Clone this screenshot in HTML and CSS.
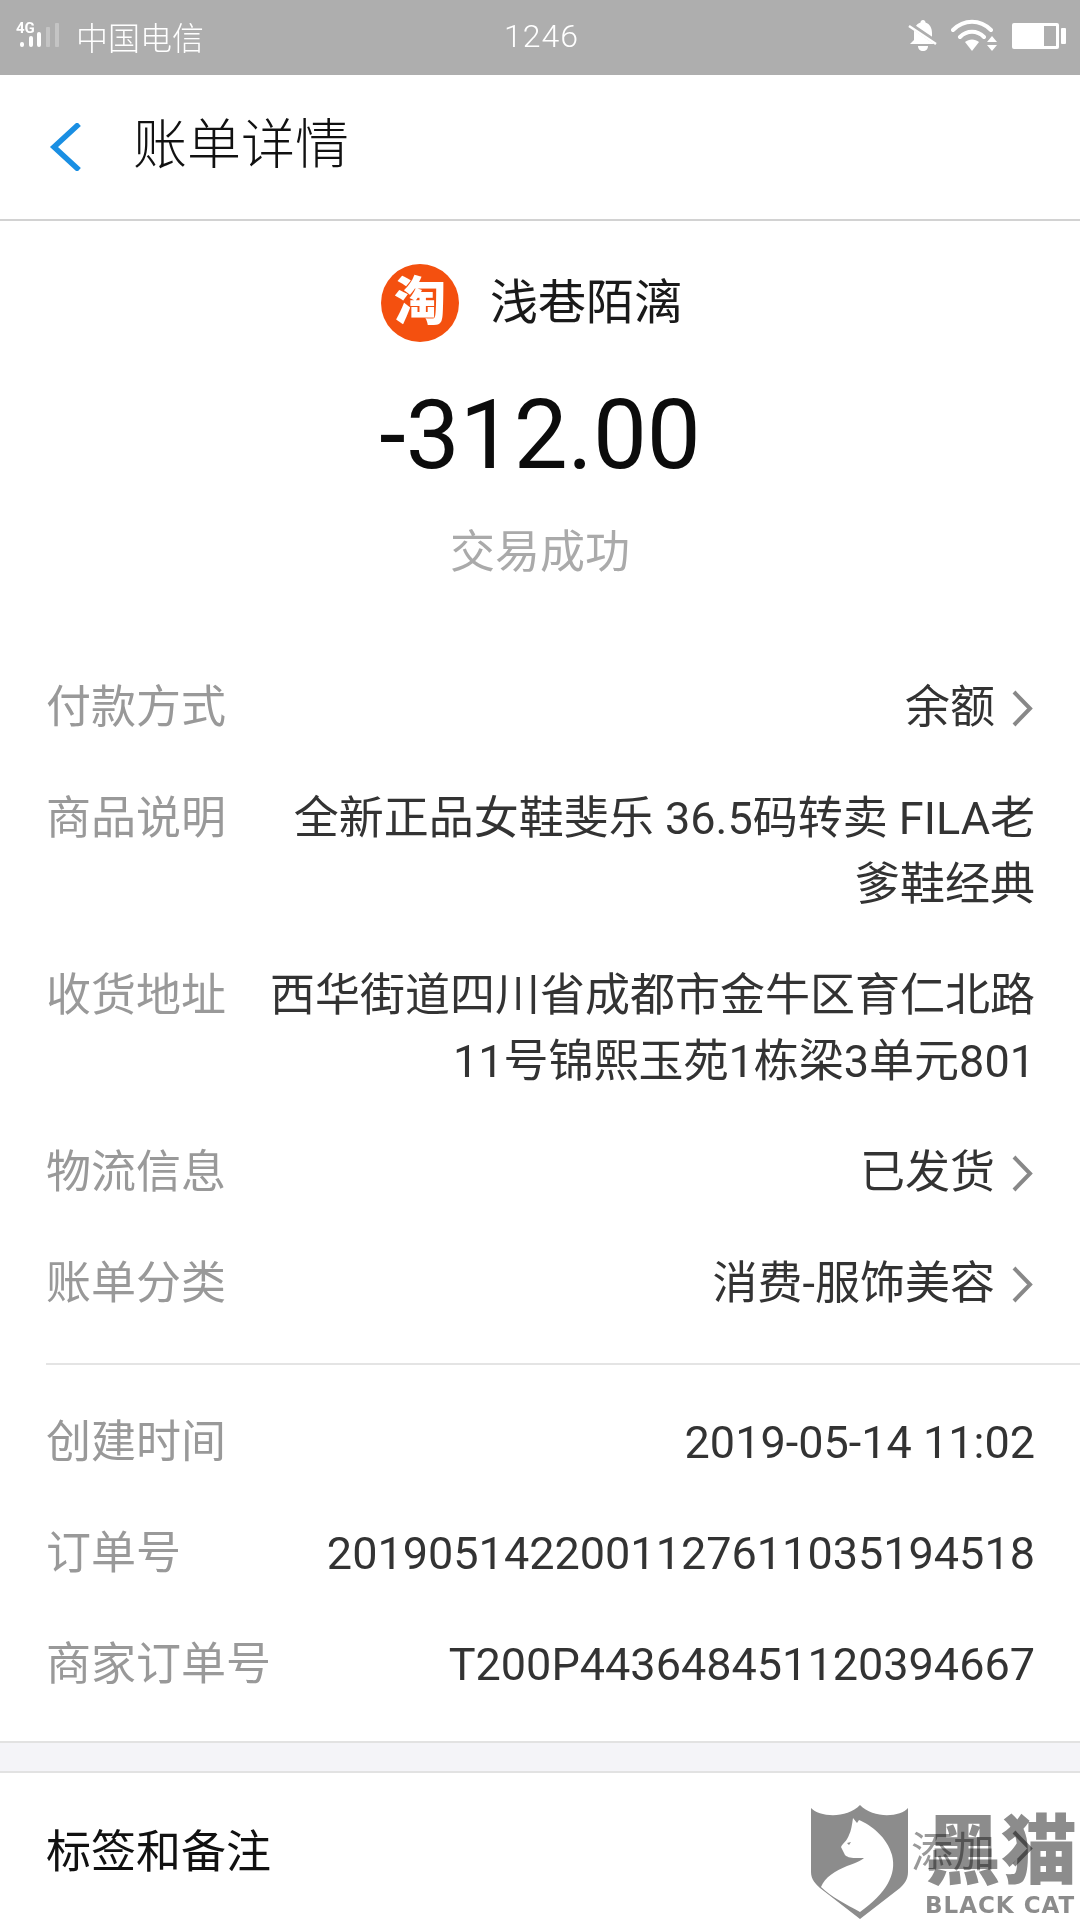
FILE: index.html
```html
<!DOCTYPE html>
<html lang="zh-CN">
<head>
    <meta charset="UTF-8">
    <meta name="viewport" content="width=device-width, initial-scale=1.0">
    <title>账单详情</title>
    <link rel="stylesheet" href="styles.css">
</head>
<body>
    <div class="status-bar">
        <div class="status-left">
            <div class="signal">
                <span class="signal-type">4G</span>
                <svg width="44" height="26" viewBox="0 0 44 26">
                    <rect x="4" y="20" width="4" height="5" rx="2" fill="#fff"/>
                    <rect x="13" y="14" width="4" height="11" rx="2" fill="#fff"/>
                    <rect x="21" y="10" width="4" height="15" rx="2" fill="#fff"/>
                    <rect x="30" y="5" width="4" height="20" rx="1" fill="#c4c4c4"/>
                    <rect x="39" y="1" width="4" height="24" rx="1" fill="#c4c4c4"/>
                </svg>
            </div>
            <span class="carrier">中国电信</span>
        </div>
        <span class="clock">1246</span>
        <div class="status-right">
            <svg width="30" height="34" viewBox="0 0 30 34">
                <path d="M15 1c1.500 0 2.500 1 2.500 2.500C22 5 24 9 24 14v7l4 4H2l4-4v-7c0-5 2-9 6.500-10.500C12.500 2 13.500 1 15 1z" fill="#fff"/>
                <path d="M10 27h10c0 3-2 5-5 5s-5-2-5-5z" fill="#fff"/>
                <path d="M1 5l28 19" stroke="#aeaeae" stroke-width="5"/>
                <path d="M1 7l27 18" stroke="#fff" stroke-width="2.500"/>
            </svg>
            <svg width="48" height="34" viewBox="0 0 48 34">
                <path d="M2 11C13 0 29 0 40 11M9 18c7-7 17-7 24 0" fill="none" stroke="#fff" stroke-width="4" stroke-linecap="round"/>
                <path d="M14 23c4-3.500 10-3.500 14 0l-7 9z" fill="#fff"/>
                <path d="M41 17l5 6H36zM36 26h10l-5 6z" fill="#fff"/>
            </svg>
            <svg width="54" height="28" viewBox="0 0 54 28">
                <rect x="0" y="1" width="47" height="26" rx="2" fill="#fff"/>
                <rect x="32" y="4" width="12" height="20" fill="#aeaeae"/>
                <rect x="49" y="6" width="5" height="16" rx="1" fill="#fff"/>
            </svg>
        </div>
    </div>

    <header class="title-bar">
        <svg class="back" width="34" height="48" viewBox="0 0 34 48">
            <path d="M31 1L6 24l25 23" fill="none" stroke="#1a8fe3" stroke-width="5.500"/>
        </svg>
        <h1>账单详情</h1>
    </header>

    <section class="summary">
        <div class="merchant">
            <span class="merchant-logo">淘</span>
            <span class="merchant-name">浅巷陌漓</span>
        </div>
        <div class="amount">-312.00</div>
        <div class="trade-status">交易成功</div>
    </section>

    <section class="details">
        <div class="row">
            <span class="label">付款方式</span>
            <span class="value">余额</span>
            <svg class="arrow" width="24" height="37" viewBox="0 0 24 37"><path d="M3 2l16 16.500L3 35" fill="none" stroke="#888" stroke-width="4"/></svg>
        </div>
        <div class="row">
            <span class="label">商品说明</span>
            <span class="value">全新正品女鞋斐乐 36.5码转卖 FILA老爹鞋经典</span>
        </div>
        <div class="row">
            <span class="label">收货地址</span>
            <span class="value">西华街道四川省成都市金牛区育仁北路11号锦熙玉苑1栋梁3单元801</span>
        </div>
        <div class="row">
            <span class="label">物流信息</span>
            <span class="value">已发货</span>
            <svg class="arrow" width="24" height="37" viewBox="0 0 24 37"><path d="M3 2l16 16.500L3 35" fill="none" stroke="#888" stroke-width="4"/></svg>
        </div>
        <div class="row">
            <span class="label">账单分类</span>
            <span class="value">消费-服饰美容</span>
            <svg class="arrow" width="24" height="37" viewBox="0 0 24 37"><path d="M3 2l16 16.500L3 35" fill="none" stroke="#888" stroke-width="4"/></svg>
        </div>
    </section>

    <section class="details order">
        <div class="row">
            <span class="label">创建时间</span>
            <span class="value">2019-05-14 11:02</span>
        </div>
        <div class="row">
            <span class="label">订单号</span>
            <span class="value">2019051422001127611035194518</span>
        </div>
        <div class="row">
            <span class="label">商家订单号</span>
            <span class="value">T200P443648451120394667</span>
        </div>
    </section>

    <div class="gap"></div>

    <section class="tags">
        <span class="tags-title">标签和备注</span>
        <span class="tags-add">添加</span>
        <svg class="arrow" width="24" height="37" viewBox="0 0 24 37"><path d="M3 2l16 16.500L3 35" fill="none" stroke="#888" stroke-width="4"/></svg>
    </section>

    <div class="watermark">
        <svg width="98" height="115" viewBox="0 0 98 115">
            <path d="M0 3C8 12 36 14 49 0c13 14 41 12 48 3v64c0 8-4 12-8 16L49 114 9 83c-4-4-9-8-9-16z" fill="#8c8c8c"/>
            <path d="M42 13l4 5 2-3c12 5 28 17 33 35 5 20-6 38-32 57C35 99 20 92 10 82c4-10 14-16 26-21 8-3 14-5 17-8-7 0-15 1-19-3l-4-8c2-4 6-6 8-12 2-4 3-10 4-17z" fill="#fff"/>
            <path d="M36 38l4-1-2 3z" fill="#8c8c8c"/>
        </svg>
        <div class="watermark-text">
            <span class="watermark-cn">黑猫</span>
            <span class="watermark-en">BLACK CAT</span>
        </div>
    </div>
</body>
</html>
```

FILE: styles.css
```css
* {
    box-sizing: border-box;
}
html, body {
    margin: 0;
    padding: 0;
}
body {
    position: relative;
    width: 1080px;
    height: 1920px;
    overflow: hidden;
    background-color: #fff;
    font-family: Roboto, "Noto Sans CJK SC", sans-serif;
    color: #222;
}
.status-bar {
    height: 75px;
    background-color: #aeaeae;
    color: #fff;
    display: flex;
    align-items: center;
    justify-content: space-between;
    padding: 0 14px 3px 16px;
    position: relative;
}
.status-left {
    display: flex;
    align-items: center;
    gap: 16px;
}
.signal {
    width: 44px;
    height: 28px;
    position: relative;
}
.signal svg {
    display: block;
}
.signal-type {
    position: absolute;
    left: 0;
    top: -1px;
    font-size: 15px;
    font-weight: 700;
    line-height: 15px;
}
.carrier {
    font-size: 32px;
    font-weight: 300;
}
.clock {
    position: absolute;
    left: 504px;
    font-size: 32px;
    font-weight: 300;
    letter-spacing: 1px;
}
.status-right {
    display: flex;
    align-items: center;
    gap: 13px;
}
.title-bar {
    height: 146px;
    display: flex;
    align-items: center;
    padding-left: 48px;
    gap: 51px;
    border-bottom: 2px solid #d2d2d2;
}
.title-bar h1 {
    margin: 0 0 14px;
    font-size: 54px;
    font-weight: 300;
    color: #111;
}
.summary {
    height: 454px;
    display: flex;
    flex-direction: column;
    align-items: center;
}
.merchant {
    display: flex;
    align-items: center;
    gap: 31px;
    margin-top: 42px;
    padding-right: 17px;
}
.merchant-logo {
    width: 78px;
    height: 78px;
    border-radius: 50%;
    background-color: #f4500f;
    color: #fff;
    font-size: 52px;
    font-weight: 900;
    line-height: 78px;
    text-align: center;
}
.merchant-name {
    font-size: 48px;
    margin-bottom: 10px;
    color: #1a1a1a;
}
.amount {
    font-size: 96px;
    line-height: 110px;
    margin-top: 37px;
    color: #0c0c0c;
}
.trade-status {
    font-size: 45px;
    line-height: 60px;
    margin-top: 33px;
    color: #aaa;
}
.details {
    padding: 0 45px 1px 46px;
}
.row {
    display: flex;
    align-items: flex-start;
    margin-bottom: 45px;
    font-size: 45px;
    line-height: 66px;
}
.label {
    flex: none;
    color: #999;
}
.value {
    flex: 1;
    max-width: 770px;
    margin-left: auto;
    text-align: right;
    color: #333;
}
.arrow {
    flex: none;
    align-self: center;
    margin-left: 16px;
}
.order {
    margin-left: 46px;
    margin-bottom: -2px;
    padding: 45px 45px 0 0;
    border-top: 2px solid #e4e4e4;
}
.gap {
    height: 32px;
    background-color: #f4f4f8;
    border-top: 2px solid #e2e2e2;
    border-bottom: 2px solid #e2e2e2;
}
.tags {
    display: flex;
    align-items: center;
    height: 154px;
    padding: 0 45px 4px 46px;
    font-size: 45px;
}
.tags-title {
    flex: 1;
    color: #111;
}
.tags-add {
    font-size: 42px;
    color: #999;
}
.watermark {
    position: absolute;
    left: 811px;
    top: 1805px;
    display: flex;
    gap: 16px;
    mix-blend-mode: multiply;
}
.watermark-text {
    display: flex;
    flex-direction: column;
    width: 154px;
    margin-top: 9px;
}
.watermark-cn {
    font-size: 76px;
    line-height: 77px;
    font-weight: 900;
    color: #8c8c8c;
}
.watermark-en {
    font-family: "DejaVu Sans", sans-serif;
    font-size: 23px;
    line-height: 28px;
    font-weight: 700;
    letter-spacing: 1px;
    color: #8c8c8c;
    white-space: nowrap;
}
```
